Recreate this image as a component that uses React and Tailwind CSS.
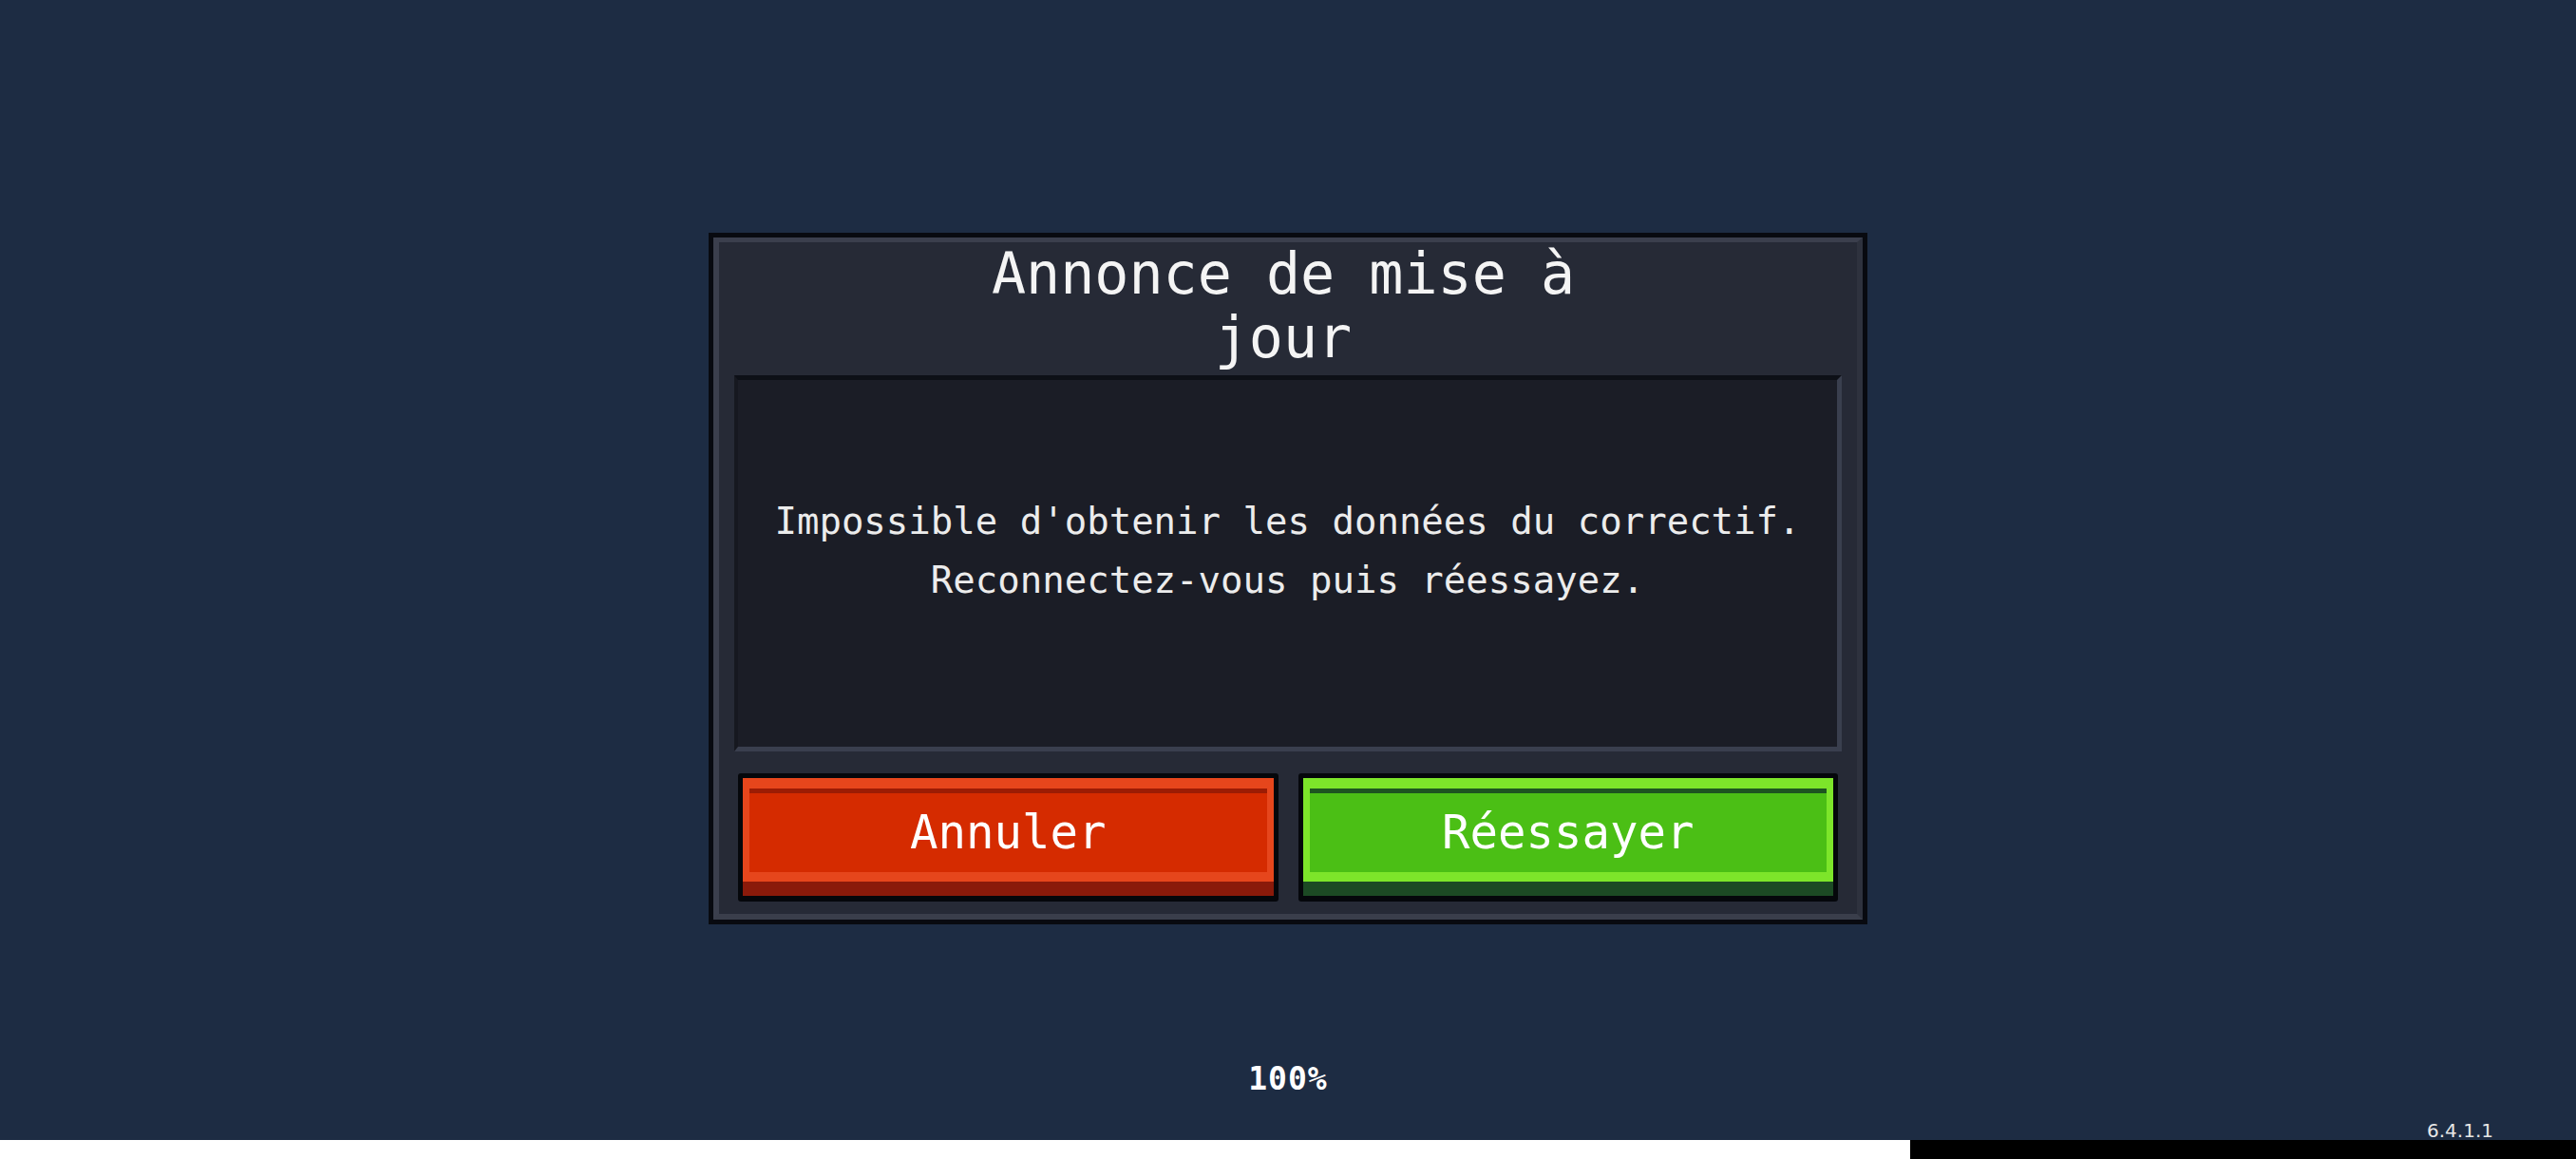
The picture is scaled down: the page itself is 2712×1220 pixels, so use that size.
import React from 'react';

// Pixel-style colour sets for the two buttons
const buttonStyles = {
  red: {
    base: 'bg-[#8a1a0a]',
    rim: 'bg-[#e6461c]',
    face: 'bg-[#d52b00] border-[#9c1c04]',
  },
  green: {
    base: 'bg-[#1c4a24]',
    rim: 'bg-[#7de52a]',
    face: 'bg-[#4bbf15] border-[#1d5520]',
  },
};

function PixelButton({ label, color }) {
  const s = buttonStyles[color];
  return (
    <button className="flex-1 bg-[#05070b] px-[5px] pt-[5px] pb-[6px] rounded-[3px]">
      <div className={`${s.base} pb-[15px]`}>
        <div className={`${s.rim} pt-[11px] pb-[10px] px-[7px]`}>
          <div
            className={`${s.face} border-t-[5px] h-[88px] flex items-center justify-center text-white text-[49px] leading-none font-['DejaVu_Sans_Mono',monospace]`}
          >
            {label}
          </div>
        </div>
      </div>
    </button>
  );
}

export default function App() {
  return (
    <div className="w-[2712px] h-[1220px] bg-[#1d2c43] flex flex-col items-center overflow-hidden font-['DejaVu_Sans_Mono',monospace]">
      {/* Update dialog */}
      <div className="mt-[245px] w-[1220px] h-[728px] border-[5px] border-[#080a10] bg-[#262a36] flex flex-col">
        <div className="flex-1 flex flex-col border-t-[5px] border-l-[6px] border-b-[6px] border-r-[6px] border-t-[#3b3f4d] border-l-[#3b3f4d] border-b-[#3a3e4b] border-r-[#2e323e]">
          {/* Title */}
          <h1 className="text-center text-[#f4f4f4] text-[60px] leading-[67px] pr-[10px]">
            Annonce de mise à
            <br />
            jour
          </h1>

          {/* Message box */}
          <div className="mt-[6px] mx-[16px] h-[396px] bg-[#1b1d26] border-t-[5px] border-l-[4px] border-r-[5px] border-b-[5px] border-t-[#0d1017] border-l-[#161820] border-r-[#3a3f4e] border-b-[#3a3f4e] flex items-center justify-center pb-[26px]">
            <p className="text-center text-[#ececec] text-[39px] leading-[62px]">
              Impossible d'obtenir les données du correctif.
              <br />
              Reconnectez-vous puis réessayez.
            </p>
          </div>

          {/* Action buttons */}
          <div className="mt-[23px] px-[20px] flex gap-[21px]">
            <PixelButton label="Annuler" color="red" />
            <PixelButton label="Réessayer" color="green" />
          </div>
        </div>
      </div>

      {/* Loading progress */}
      <div className="mt-[147px] text-white text-[33px] font-bold leading-[32px] tracking-[1px]">100%</div>

      {/* Version + bottom bar */}
      <div className="mt-auto w-full flex flex-col">
        <div className="flex justify-end pr-[87px]">
          <span className="text-[#e6e6e6] text-[20px] leading-[20px] font-['DejaVu_Sans',sans-serif]">6.4.1.1</span>
        </div>
        <div className="flex h-[20px]">
          <div className="w-[2011px] bg-white" />
          <div className="flex-1 bg-black" />
        </div>
      </div>
    </div>
  );
}
